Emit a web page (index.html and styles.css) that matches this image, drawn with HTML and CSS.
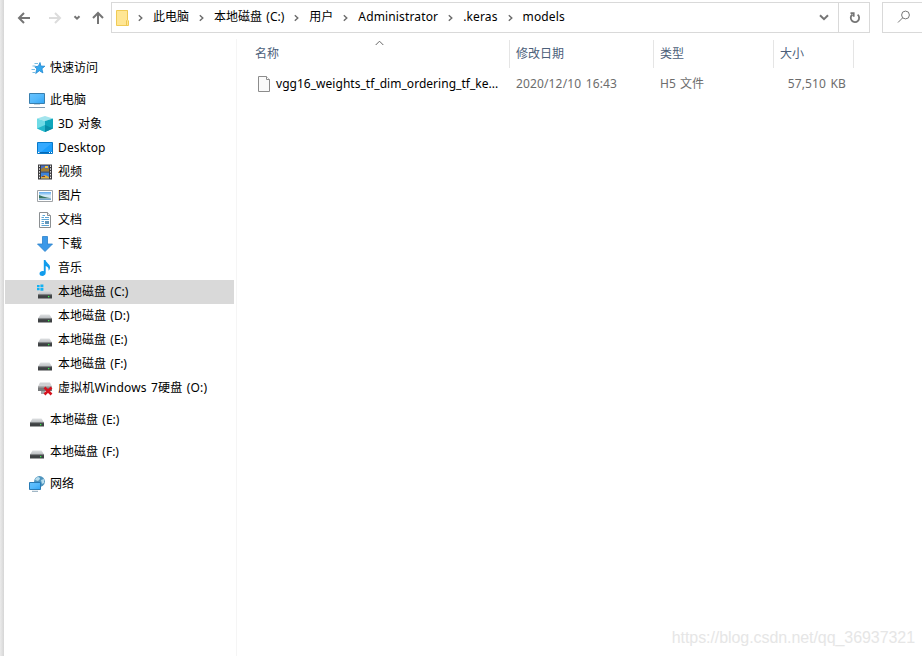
FILE: index.html
```html
<!DOCTYPE html>
<html lang="zh-CN">
<head>
  <meta charset="UTF-8" />
  <meta name="viewport" content="width=device-width, initial-scale=1.0" />
  <title>models</title>
  <link rel="stylesheet" href="styles.css">
</head>
<body>
  <svg class="defs" width="0" height="0">
    <defs>
      <linearGradient id="blue" x1="0" y1="0" x2="1" y2="1">
        <stop offset="0" stop-color="#67c3ff" /><stop offset="0.5" stop-color="#55b9fb" /><stop offset="1" stop-color="#2fa4f5" />
      </linearGradient>
      <linearGradient id="metal" x1="0" y1="0" x2="0" y2="1">
        <stop offset="0" stop-color="#dfe1e3" /><stop offset="1" stop-color="#b9bcbf" />
      </linearGradient>
      <linearGradient id="sky" x1="0" y1="0" x2="0" y2="1">
        <stop offset="0" stop-color="#5fa8ec" /><stop offset="0.45" stop-color="#d5ebf8" /><stop offset="0.7" stop-color="#cfe3ee" /><stop offset="1" stop-color="#5d97c8" />
      </linearGradient>
      <symbol id="sep" viewBox="0 0 25 12">
        <path d="M10.8 3.2l3 2.8-3 2.8" fill="none" stroke="#6b6b6b" stroke-width="1.4" />
      </symbol>
      <symbol id="disk" viewBox="0 0 16 16">
        <path d="M3.5 6.500h9l2.500 4H1z" fill="url(#metal)" />
        <path d="M1 10.500h14V14.500H1z" fill="#3e4143" />
        <path d="M1 10.500h14v.7H1z" fill="#75787a" />
        <path d="M11 12h1.300v1.300H11z" fill="#35ef4a" />
      </symbol>
    </defs>
  </svg>

  <div class="window">
    <div class="toolbar">
      <div class="nav">
        <svg class="back" width="14" height="14" viewBox="0 0 14 14"><path d="M13 7H2M7 2L2 7l5 5" /></svg>
        <svg class="forward" width="14" height="14" viewBox="0 0 14 14"><path d="M1 7h11M7 2l5 5-5 5" /></svg>
        <svg class="recent" width="8" height="6" viewBox="0 0 8 6"><path d="M1.500 1.200L4 3.700l2.500-2.500" /></svg>
        <svg class="up" width="14" height="14" viewBox="0 0 14 14"><path d="M7 13V2M2 7l5-5 5 5" /></svg>
      </div>
      <div class="address">
        <svg class="folder" width="14" height="16" viewBox="0 0 14 16">
          <path d="M.5.5h11v9.600l1 .6v4.800H.5z" fill="#ffe694" stroke="#f0cb55" />
          <path d="M10.500 10.300v5M11.500 9.500V.5" fill="none" stroke="#eec653" />
        </svg>
        <svg class="sep" width="25" height="12"><use href="#sep" /></svg><span>此电脑</span>
        <svg class="sep" width="25" height="12"><use href="#sep" /></svg><span>本地磁盘 (C:)</span>
        <svg class="sep" width="25" height="12"><use href="#sep" /></svg><span>用户</span>
        <svg class="sep" width="25" height="12"><use href="#sep" /></svg><span class="latin">Administrator</span>
        <svg class="sep" width="25" height="12"><use href="#sep" /></svg><span class="latin">.keras</span>
        <svg class="sep" width="25" height="12"><use href="#sep" /></svg><span class="latin">models</span>
        <svg class="dropdown" width="10" height="7" viewBox="0 0 10 7"><path d="M1 1.200l4 4 4-4" /></svg>
        <div class="refresh">
          <svg width="12" height="13" viewBox="0 0 12 13"><path d="M3.400 3.600A4.200 4.200 0 1 0 8.600 3.500M6.500 2.200h4M7.300 1.500v4.300" transform="matrix(-1 0 0 1 12 0)" /></svg>
        </div>
      </div>
      <div class="search">
        <svg width="14" height="14" viewBox="0 0 14 14"><circle cx="8.500" cy="5" r="3.900" /><path d="M5.700 7.800L1 12.500" /></svg>
      </div>
    </div>

    <div class="main">
      <div class="sidebar">
        <div class="item quick">
          <svg width="16" height="16" viewBox="0 0 16 16">
            <path d="M9 2.500l.9 3.600 4 .1-3 2.500 1 4.200-3.500-2.200-3.700 2.800 1.100-4.600-2-2.100 3.600-.6z" fill="#35a9ee" stroke="#2188d2" stroke-width=".8" />
            <path d="M3.500 3.500H7M1.500 6h3M.5 9.500H4M1.500 12.500H4" stroke="#6db5dd" stroke-width=".9" />
          </svg>
          <span>快速访问</span>
        </div>

        <div class="item group">
          <svg width="16" height="16" viewBox="0 0 16 16">
            <path d="M.5 1.500h15v10H.5z" fill="url(#blue)" stroke="#397fae" />
            <path d="M5 12.500h6" stroke="#c4d5e0" /><path d="M0 15.500h16" stroke="#8298ad" />
          </svg>
          <span>此电脑</span>
        </div>
        <div class="item sub">
          <svg width="16" height="16" viewBox="0 0 16 16">
            <path d="M8 0l8 2.500L8 5 0 2.500z" fill="#a3e4ed" />
            <path d="M0 2.500L8 5v11l-8-3.500z" fill="#6fdbe6" />
            <path d="M16 2.500L8 5v11l8-3.500z" fill="#0fa6bc" />
            <path d="M0 12.500L8 9v7z" fill="#25b8cb" /><path d="M8 9l8 3.500L8 16z" fill="#078ca7" />
          </svg>
          <span>3D 对象</span>
        </div>
        <div class="item sub">
          <svg width="16" height="16" viewBox="0 0 16 16">
            <path d="M.5 2.500h15v11H.5z" fill="#1b9efc" stroke="#0879c9" />
            <path d="M1 3h14L4 12H1z" fill="#35aaff" /><path d="M1 12.500h14" stroke="#0669b5" /><path d="M1 12.500h1.500M12 12.500h1M14 12.500h1" stroke="#fff" />
          </svg>
          <span class="latin">Desktop</span>
        </div>
        <div class="item sub">
          <svg width="16" height="16" viewBox="0 0 16 16">
            <path d="M1 .5h14v15H1z" fill="#3d3c3f" />
            <path d="M4 1.500h8v6H4z" fill="#446dc9" /><path d="M4 8.500h8v6H4z" fill="#3d83db" />
            <path d="M4 5l3-2 2 2 3-1v3.500H4z" fill="#9f7d33" /><path d="M8 2h3v2H8z" fill="#efc747" />
            <path d="M4 13l4-2 4 2v1.500H4z" fill="#e2b13b" /><path d="M5 12h3v1H5z" fill="#7b3d3a" />
            <path d="M2.500 1.500v13M13.500 1.500v13" stroke="#e7e7e7" stroke-width="1" stroke-dasharray="1.500 1.300" />
          </svg>
          <span>视频</span>
        </div>
        <div class="item sub">
          <svg width="16" height="16" viewBox="0 0 16 16">
            <path d="M.5 2.500h15v11H.5z" fill="#fff" stroke="#a0a3a6" />
            <path d="M2 4h12v8H2z" fill="url(#sky)" /><path d="M2 7l4 1.500 4 1 4 .8H2z" fill="#397561" />
          </svg>
          <span>图片</span>
        </div>
        <div class="item sub">
          <svg width="16" height="16" viewBox="0 0 16 16">
            <path d="M2.500.5h8l3 3v12h-11z" fill="#fff" stroke="#8b8f92" /><path d="M10.500.5v3h3" fill="#eee" stroke="#8b8f92" />
            <path d="M5.500 3.500H8M4.500 5.500H7M8 5.500h4M4.500 7.500H12M4.500 9.500H7M4.500 11.500H7M4.500 13.500H12" stroke="#4a9bd0" stroke-width=".9" /><path d="M8 9h4v3H8z" fill="#6296b9" />
          </svg>
          <span>文档</span>
        </div>
        <div class="item sub">
          <svg width="16" height="16" viewBox="0 0 16 16"><path d="M5.500.5h5v7.500h5L8 15.500.5 8h5z" fill="#3c99e8" stroke="#2980ca" stroke-width=".8" /></svg>
          <span>下载</span>
        </div>
        <div class="item sub">
          <svg width="16" height="16" viewBox="0 0 16 16">
            <path d="M6.800 0h1.700c.4 3 5 3.800 4.500 8-.3 1.500-.8 2.200-1.500 2.800.5-3-.9-4.300-2.800-4.800v6.800c0 4-6.200 4-6.200.9 0-2.300 2.500-3.300 4.300-2.500z" fill="#119cec" />
          </svg>
          <span>音乐</span>
        </div>
        <div class="item sub selected">
          <svg width="16" height="16" viewBox="0 0 16 16">
            <use href="#disk" />
            <path d="M0 1h2.600v2.300H0zM3.400.6h3v2.700h-3zM0 4h2.600v2.300H0zM3.400 4h3v2.700h-3z" fill="#13b1f2" />
          </svg>
          <span>本地磁盘 (C:)</span>
        </div>
        <div class="item sub">
          <svg width="16" height="16"><use href="#disk" /></svg>
          <span>本地磁盘 (D:)</span>
        </div>
        <div class="item sub">
          <svg width="16" height="16"><use href="#disk" /></svg>
          <span>本地磁盘 (E:)</span>
        </div>
        <div class="item sub">
          <svg width="16" height="16"><use href="#disk" /></svg>
          <span>本地磁盘 (F:)</span>
        </div>
        <div class="item sub">
          <svg width="16" height="16" viewBox="0 0 16 16">
            <path d="M3 2.500h10l2 4H1z" fill="#cfd1d3" /><path d="M1 6.500h14V11H1z" fill="#77797b" /><path d="M1 6.500h14v1H1z" fill="#aaa" />
            <path d="M4 11h4v3H4z" fill="#a5a7a9" /><path d="M7.500 7.500l7 7M14.500 7.500l-7 7" stroke="#d5121e" stroke-width="2.500" />
          </svg>
          <span class="latin">虚拟机Windows 7硬盘 (O:)</span>
        </div>

        <div class="item group">
          <svg width="16" height="16"><use href="#disk" /></svg>
          <span>本地磁盘 (E:)</span>
        </div>
        <div class="item group">
          <svg width="16" height="16"><use href="#disk" /></svg>
          <span>本地磁盘 (F:)</span>
        </div>
        <div class="item group">
          <svg width="16" height="16" viewBox="0 0 16 16">
            <circle cx="10.500" cy="5.500" r="5.400" fill="#4e94bd" /><path d="M7 2c2-2 4-1 4 1L9 5 6 4zM12 4l3-1v4l-2 1z" fill="#b5dced" />
            <path d="M.5 6.500h11v7H.5z" fill="url(#blue)" stroke="#287bb5" /><path d="M3 15.300h6" stroke="#8aa6b8" />
          </svg>
          <span>网络</span>
        </div>
      </div>

      <div class="files">
        <div class="row head">
          <div class="name">名称
            <svg class="sort" width="9" height="6" viewBox="0 0 9 6"><path d="M.7 5l3.800-3.800L8.300 5" /></svg>
          </div>
          <div class="date">修改日期</div>
          <div class="type">类型</div>
          <div class="size">大小</div>
        </div>
        <div class="row file">
          <div class="name">
            <svg width="13" height="16" viewBox="0 0 13 16">
              <path d="M.5.5h8l3 3v12H.5z" fill="#fafafa" stroke="#8c8c8c" /><path d="M8.500.5v3h3" fill="#fff" stroke="#8c8c8c" />
            </svg>
            <span>vgg16_weights_tf_dim_ordering_tf_ke...</span>
          </div>
          <div class="date latin">2020/12/10 16:43</div>
          <div class="type">H5 文件</div>
          <div class="size latin">57,510 KB</div>
        </div>
      </div>
    </div>
  </div>
  <div class="watermark">https://blog.csdn.net/qq_36937321</div>
</body>
</html>
```
FILE: styles.css
```css
* {
  box-sizing: border-box;
}

body {
  margin: 0;
  height: 656px;
  overflow: hidden;
  background: linear-gradient(to right, #ebebeb, #d6d6d6 4px, #fff 4px);
  color: #000;
  font-family: "Noto Sans", "Noto Sans CJK SC", sans-serif;
  font-size: 12px;
  line-height: 16px;
  word-spacing: 1.2px;
  white-space: nowrap;
}

svg {
  flex: none;
  display: block;
}

.defs {
  position: absolute;
}

.latin {
  letter-spacing: 0.14px;
}

.window {
  height: 656px;
  padding-left: 4px;
  display: flex;
  flex-direction: column;
}

.toolbar {
  display: flex;
  height: 33px;
  padding-top: 2px;
  flex: none;
}

.nav {
  display: flex;
  align-items: center;
  width: 107px;
  padding-left: 13px;
}

.nav svg {
  fill: none;
  stroke: #757575;
  stroke-width: 2;
}

.nav .forward {
  margin-left: 17px;
  stroke: #dcdcdc;
}

.nav .recent {
  margin-left: 11px;
}

.nav .up {
  margin-left: 10px;
}

.address {
  display: flex;
  align-items: center;
  width: 759px;
  border: 1px solid #d9d9d9;
  padding-left: 4px;
}

.address span {
  position: relative;
  top: -1px;
}

.folder + .sep {
  margin-left: -1px;
}

.folder {
  margin-right: -1px;
}

.dropdown {
  margin-left: auto;
  margin-right: 9px;
  fill: none;
  stroke: #757575;
  stroke-width: 2;
}

.refresh {
  width: 31px;
  height: 29px;
  border-left: 1px solid #d9d9d9;
  display: flex;
  align-items: center;
  justify-content: center;
}

.refresh svg {
  margin-left: 2px;
  fill: none;
  stroke: #757575;
  stroke-width: 1.8;
}

.search {
  flex: 1;
  margin-left: 12px;
  border: 1px solid #d9d9d9;
  border-right: none;
  display: flex;
  align-items: center;
  padding-left: 14px;
}

.search svg {
  margin-top: -2px;
  fill: none;
  stroke: #777;
  stroke-width: 1;
}

.main {
  display: flex;
  flex: 1;
  padding-top: 6px;
}

.sidebar {
  width: 233px;
  padding: 17px 2px 0 1px;
  border-right: 1px solid #f5f5f5;
}

.item {
  display: flex;
  align-items: center;
  height: 24px;
  padding-left: 24px;
}

.item span {
  margin-left: 5px;
}

.item.quick {
  padding-left: 26px;
}

.item.quick span {
  margin-left: 3px;
}

.item.group {
  margin-top: 8px;
}

.item.sub {
  padding-left: 32px;
}

.item.selected {
  background: #d9d9d9;
}

.files {
  flex: 1;
}

.row {
  display: flex;
}

.row .name {
  width: 273px;
  padding-left: 18px;
}

.row .date {
  width: 144px;
  padding-left: 6px;
}

.row .type {
  width: 120px;
  padding-left: 6px;
}

.row .size {
  width: 80px;
  padding-left: 6px;
}

.head {
  height: 28px;
  margin-top: 1px;
  line-height: 28px;
  color: #4c607a;
}

.head div {
  position: relative;
  border-right: 1px solid #e5e5e5;
}

.sort {
  position: absolute;
  left: 138px;
  top: 0;
  fill: none;
  stroke: #666;
}

.file {
  height: 32px;
  align-items: center;
  color: #6d6d6d;
}

.file .name {
  display: flex;
  align-items: center;
  padding-left: 21px;
  color: #000;
}

.file .name span {
  margin-left: 5px;
  letter-spacing: 0.03px;
}

.file .size {
  padding: 0 8px 0 0;
  text-align: right;
}

.watermark {
  position: absolute;
  right: 7px;
  bottom: 9px;
  font: 16px/18px "Liberation Sans", sans-serif;
  letter-spacing: -0.07px;
  color: #e6e6e6;
}
```
